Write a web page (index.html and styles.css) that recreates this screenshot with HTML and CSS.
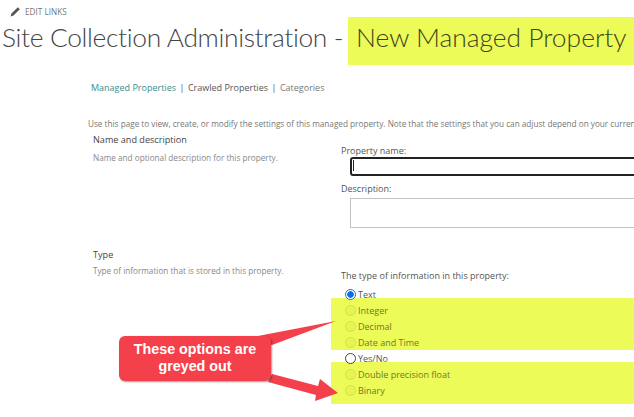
FILE: index.html
```html
<!DOCTYPE html>
<html lang="en">
<head>
    <meta charset="UTF-8">
    <meta name="viewport" content="width=device-width, initial-scale=1.0">
    <title>New Managed Property</title>
    <link rel="stylesheet" href="styles.css">
</head>
<body>
    <div class="edit-links">
        <svg class="pencil" width="11" height="11" viewBox="0 0 11 11"><path d="M0.5 10.5 L1.5 7.5 L7.8 1.2 L9.8 3.2 L3.5 9.5 Z" fill="#555"/></svg>
        <span>EDIT LINKS</span>
    </div>
    <h1 class="title"><span class="title-site">Site Collection Administration -</span><span class="title-mark">New Managed Property</span></h1>

    <nav class="tabs">
        <a class="tab-active">Managed Properties</a><i>|</i><a>Crawled Properties</a><i>|</i><a class="tab-plain">Categories</a>
    </nav>

    <p class="intro">Use this page to view, create, or modify the settings of this managed property. Note that the settings that you can adjust depend on your current permissions.</p>

    <section class="row row-name">
        <div class="info">
            <h2>Name and description</h2>
            <p>Name and optional description for this property.</p>
        </div>
        <div class="fields">
            <label>Property name:</label>
            <div class="text-box"><span class="caret"></span></div>
            <label class="label-desc">Description:</label>
            <div class="text-area"></div>
        </div>
    </section>

    <section class="row row-type">
        <div class="info">
            <h2>Type</h2>
            <p>Type of information that is stored in this property.</p>
        </div>
        <div class="fields">
            <label>The type of information in this property:</label>
            <div class="options">
                <div class="option"><input type="radio" name="kind" checked><span>Text</span></div>
                <div class="mark">
                    <div class="option off"><input type="radio" disabled><span>Integer</span></div>
                    <div class="option off"><input type="radio" disabled><span>Decimal</span></div>
                    <div class="option off"><input type="radio" disabled><span>Date and Time</span></div>
                </div>
                <div class="option"><input type="radio" name="kind"><span>Yes/No</span></div>
                <div class="mark mark-low">
                    <div class="option off"><input type="radio" disabled><span>Double precision float</span></div>
                    <div class="option off"><input type="radio" disabled><span>Binary</span></div>
                </div>
            </div>
        </div>
    </section>

    <svg class="arrows" width="634" height="417" viewBox="0 0 634 417">
        <path d="M253 337 L336 321 L272 345 Z" fill="#f4404a"/>
        <path d="M272 374 L318 386 L320 379 L338 393 L315 401 L316 395 L268 382 Z" fill="#f4404a"/>
    </svg>
    <div class="callout">These options are greyed out</div>
</body>
</html>
```
FILE: styles.css
```css
html, body {
    height: 100%;
    overflow: hidden;
}
body {
    margin: 0;
    background: #fff;
    font-family: "Open Sans", "Noto Sans", sans-serif;
    font-size: 9px;
    color: #666;
    position: relative;
}
.edit-links {
    display: flex;
    align-items: center;
    gap: 4px;
    height: 11px;
    padding: 6px 0 0 10px;
    font-size: 8.2px;
    color: #777;
}
.title {
    display: flex;
    margin: 0;
    font-family: Lato, "Open Sans", sans-serif;
    font-size: 26.4px;
    font-weight: 300;
    line-height: 41px;
    color: #444;
    white-space: nowrap;
}
.title-site {
    box-sizing: border-box;
    width: 348px;
    height: 48px;
    padding-left: 2px;
    letter-spacing: -0.35px;
}
.title-mark {
    flex: 1;
    height: 48px;
    padding-left: 8px;
    background: #ecfb57;
    color: #3f4420;
}
.tabs {
    margin: 15px 0 0 91px;
    line-height: 16px;
    font-size: 9px;
    color: #555;
}
.tabs i {
    font-style: normal;
    margin: 0 3.5px;
}
.tab-active {
    color: #3d8d8d;
}
.tab-plain {
    color: #777;
}
.intro {
    margin: 22px 0 0 88px;
    line-height: 12px;
    font-size: 8.2px;
    color: #777;
    white-space: nowrap;
}
.row {
    display: grid;
    grid-template-columns: 248px 400px;
    margin-left: 93px;
}
.row-name {
    margin-top: 3px;
}
.row-type {
    margin-top: 20px;
}
.info h2 {
    margin: 0;
    font-size: 9.1px;
    font-weight: 400;
    line-height: 13px;
    color: #444;
}
.info p {
    margin: 6px 0 0;
    font-size: 8.2px;
    line-height: 12px;
    color: #888;
}
.row-type .info p {
    margin-top: 4px;
}
.fields label {
    display: block;
    line-height: 13px;
    font-size: 9px;
    color: #555;
}
.row-name .fields {
    padding-top: 11px;
}
.text-box {
    margin: 0 0 0 9px;
    height: 14px;
    border: 2px solid #222;
    border-radius: 3px;
    padding: 1px 0 0 1px;
}
.caret {
    display: block;
    width: 1px;
    height: 11px;
    background: #222;
}
.label-desc {
    margin-top: 6px;
}
.text-area {
    margin: 3px 0 0 9px;
    height: 28px;
    border: 1px solid #c4c4c4;
}
.row-type .fields {
    padding-top: 21px;
}
.options {
    margin-top: 4px;
}
.option {
    display: flex;
    align-items: center;
    gap: 2px;
    height: 16px;
    padding-left: 4px;
    color: #555;
}
.option input {
    appearance: none;
    box-sizing: border-box;
    width: 11px;
    height: 11px;
    margin: 0;
    border: 1px solid #444;
    border-radius: 50%;
    background: #fff;
}
.option input:checked {
    border-color: #0a6fe0;
    background: radial-gradient(circle, #0a6fe0 0 3px, #fff 3.5px);
}
.option.off {
    color: #6e7a2c;
}
.option.off input {
    border-color: #d5e04f;
    background: #e6f454;
}
.mark {
    background: #ecfb57;
    margin: -4px 0 0 -10px;
    padding: 4px 0 0 10px;
}
.mark-low {
    padding-bottom: 6px;
}
.arrows {
    position: absolute;
    left: 0;
    top: 0;
}
.callout {
    position: absolute;
    left: 119px;
    top: 336px;
    box-sizing: border-box;
    width: 152px;
    height: 45px;
    padding: 5px 10px;
    border-radius: 6px;
    background: #f4404a;
    box-shadow: 1px 1px 2px rgba(0, 0, 0, 0.4);
    font-family: "Liberation Sans", Arial, sans-serif;
    font-size: 14.3px;
    font-weight: 700;
    line-height: 17px;
    text-align: center;
    color: #fff;
}
```
